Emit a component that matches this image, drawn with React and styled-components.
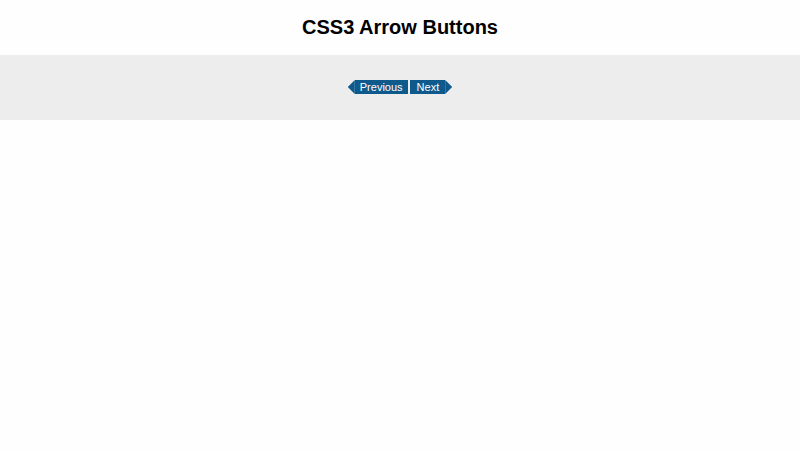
import React from 'react'
import styled, { createGlobalStyle } from 'styled-components'

const Global = createGlobalStyle`
  body {
    margin: 0;
    background: #fefefe;
    font-family: "Liberation Sans", Arial, sans-serif;
  }
`

const Header = styled.header`
  height: 55px;
  display: flex;
  align-items: center;
  justify-content: center;
`

const Title = styled.h1`
  margin: 0;
  font-size: 20px;
  font-weight: bold;
  color: #000;
`

const Band = styled.section`
  height: 65px;
  box-sizing: border-box;
  padding-top: 25px;
  background: #ededed;
  display: flex;
  align-items: flex-start;
  justify-content: center;
  gap: 2px;
`

const ArrowButton = styled.a`
  position: relative;
  display: inline-block;
  height: 14px;
  line-height: 14px;
  padding: ${p => (p.$dir === 'left' ? '0 5px 0 5px' : '0 6px 0 7px')};
  margin: ${p => (p.$dir === 'left' ? '0 0 0 7px' : '0 7px 0 0')};
  background: #0f5a8c;
  color: #fff;
  font-size: 11px;
  text-decoration: none;
  cursor: pointer;

  &::before {
    content: '';
    position: absolute;
    top: 0;
    ${p => (p.$dir === 'left' ? 'left: -7px;' : 'right: -7px;')}
    width: 7px;
    height: 14px;
    background: #0f5a8c;
    clip-path: ${p =>
      p.$dir === 'left'
        ? 'polygon(100% 0, 100% 100%, 0 50%)'
        : 'polygon(0 0, 100% 50%, 0 100%)'};
  }
`

export default function App() {
  return (
    <>
      <Global />
      <Header>
        <Title>CSS3 Arrow Buttons</Title>
      </Header>
      <Band>
        <ArrowButton $dir="left">Previous</ArrowButton>
        <ArrowButton $dir="right">Next</ArrowButton>
      </Band>
    </>
  )
}
